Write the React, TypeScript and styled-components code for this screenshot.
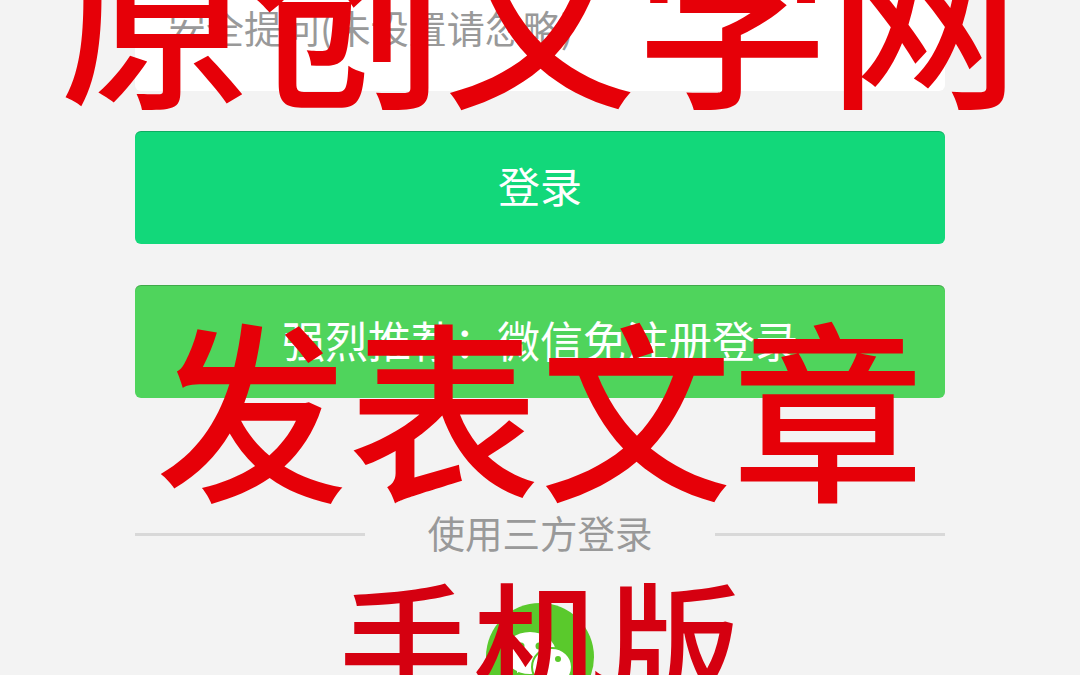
import styled, { createGlobalStyle } from "styled-components"

const GlobalStyle = createGlobalStyle`
  html, body {
    margin: 0;
    padding: 0;
    background: #f3f3f3;
  }
`

const Page = styled.div`
  position: relative;
  width: 1080px;
  height: 675px;
  overflow: hidden;
  background: #f3f3f3;
  font-family: "Noto Sans CJK SC", "Liberation Sans", sans-serif;
`

const Form = styled.div`
  display: flex;
  flex-direction: column;
  padding: 0 135px;
`

const Field = styled.div`
  display: flex;
  align-items: center;
  height: 91px;
  padding: 0 33px 38px;
  box-sizing: border-box;
  background: #fff;
  border-radius: 0 0 6px 6px;
  color: #999;
  font-size: 38px;
  line-height: 60px;
`

const Button = styled.div<{ $bg: string; $top: number; $size: number }>`
  display: flex;
  align-items: center;
  justify-content: center;
  height: 113px;
  padding-bottom: 6px;
  box-sizing: border-box;
  margin-top: ${(p) => p.$top}px;
  border-radius: 6px;
  background: ${(p) => p.$bg};
  box-shadow: inset 0 1px 0 rgba(0, 0, 0, 0.2);
  color: #fff;
  font-size: ${(p) => p.$size}px;
  white-space: nowrap;
`

const Divider = styled.div`
  display: flex;
  align-items: center;
  justify-content: space-between;
  margin-top: 110px;
  height: 53px;
  color: #999;
  font-size: 37.5px;
`

const DividerLabel = styled.span`
  padding-bottom: 7px;
`

const Rule = styled.span`
  width: 230px;
  height: 3px;
  background: #d8d8d8;
`

const Badge = styled.div`
  align-self: center;
  width: 108px;
  height: 108px;
  margin-top: 42px;
  border-radius: 50%;
  background: #5ac92c;
`

const Watermark = styled.div<{ $top: number; $size: number; $color: string }>`
  position: absolute;
  left: 0;
  right: 0;
  top: ${(p) => p.$top}px;
  text-align: center;
  font-size: ${(p) => p.$size}px;
  line-height: 1;
  font-weight: 500;
  color: ${(p) => p.$color};
  white-space: nowrap;
`

function WechatIcon() {
  return (
    <svg width="108" height="108" viewBox="0 0 108 108">
      <ellipse cx="44" cy="50" rx="26" ry="21" fill="#fff" />
      <path d="M31 62v8l11-6z" fill="#fff" />
      <circle cx="35" cy="43" r="3.5" fill="#5ac92c" />
      <circle cx="53" cy="43" r="3.5" fill="#5ac92c" />
      <ellipse cx="66" cy="64" rx="20" ry="19" fill="#fff" stroke="#5ac92c" strokeWidth="2" />
      <circle cx="59" cy="56" r="3" fill="#5ac92c" />
      <circle cx="72" cy="56" r="3" fill="#5ac92c" />
    </svg>
  )
}

export default function App() {
  return (
    <Page>
      <GlobalStyle />
      <Form>
        <Field>安全提问(未设置请忽略)</Field>
        <Button $bg="#12d87a" $top={40} $size={42}>登录</Button>
        <Button $bg="#4fd45c" $top={41} $size={43}>强烈推荐：微信免注册登录</Button>
        <Divider>
          <Rule />
          <DividerLabel>使用三方登录</DividerLabel>
          <Rule />
        </Divider>
        <Badge>
          <WechatIcon />
        </Badge>
      </Form>
      <Watermark $top={-86} $size={192} $color="#e60008">原创文学网</Watermark>
      <Watermark $top={307} $size={192} $color="#e60008">发表文章</Watermark>
      <Watermark $top={572} $size={134} $color="#d50010">手机版</Watermark>
    </Page>
  )
}
